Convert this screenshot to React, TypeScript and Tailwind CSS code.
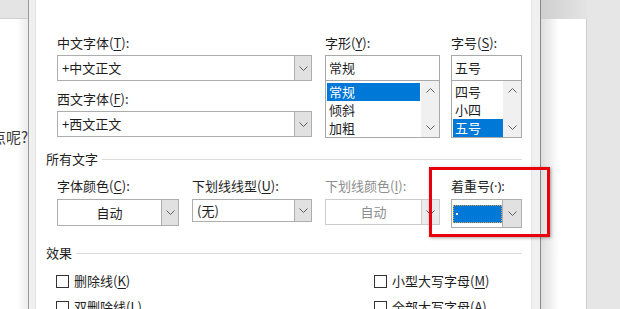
import type { ReactNode } from "react";

const FONT = { fontFamily: '"Noto Sans CJK SC", "Noto Sans", sans-serif' };

function Chevron({ up = false }: { up?: boolean }) {
  return (
    <svg width="9" height="5" viewBox="0 0 9 5" fill="none" stroke="#5f5f5f" strokeWidth="1">
      <path d={up ? "M0.5 4.5 L4.5 0.5 L8.5 4.5" : "M0.5 0.5 L4.5 4.5 L8.5 0.5"} />
    </svg>
  );
}

function Label({ text, hot, rest, disabled }: { text: string; hot: string; rest: string; disabled?: boolean }) {
  return (
    <div className={`h-4 whitespace-nowrap text-[13px] leading-4 ${disabled ? "text-[#8d8d8d]" : "text-[#1e1e1e]"}`}>
      {text}(<span className="underline underline-offset-2">{hot}</span>){rest}
    </div>
  );
}

function DropButton({ w = "w-[17px]" }: { w?: string }) {
  return (
    <div className={`flex ${w} shrink-0 items-center justify-center border-l border-[#adadad] bg-[#e1e1e1]`}>
      <Chevron />
    </div>
  );
}

function Combo({ value, h = "h-[26px]" }: { value: string; h?: string }) {
  return (
    <div className={`flex ${h} border border-[#adadad] bg-white`}>
      <div className="flex flex-1 items-center pl-[4px] text-[13px] text-[#1e1e1e]">{value}</div>
      <DropButton />
    </div>
  );
}

function ListBox({ items, selected, itemW }: { items: string[]; selected: number; itemW: string }) {
  return (
    <div className="flex h-[57px] border border-t-0 border-[#a9a9a9] bg-white">
      <div className="flex flex-1 flex-col pl-[1px] pt-[2px]">
        {items.map((it, i) => (
          <div
            key={it}
            className={`flex h-[18px] ${itemW} items-center pl-[2px] text-[13px] ${
              i === selected ? "bg-[#0078d7] text-white" : "text-[#1e1e1e]"
            }`}
          >
            {it}
          </div>
        ))}
      </div>
      <div className="flex w-[18px] flex-col items-center justify-between bg-[#f0f0f0] py-[7px]">
        <Chevron up />
        <Chevron />
      </div>
    </div>
  );
}

function Section({ title }: { title: string }) {
  return (
    <div className="flex h-4 items-center pl-[10px] pr-[9px]">
      <span className="text-[13px] leading-4 text-[#1e1e1e]">{title}</span>
      <div className="ml-[4px] h-px flex-1 bg-[#dcdcdc]" />
    </div>
  );
}

function Check({ children }: { children: ReactNode }) {
  return (
    <div className="flex h-[26px] items-center">
      <div className="h-[13px] w-[13px] border border-[#333] bg-white" />
      <span className="ml-[5px] whitespace-nowrap text-[13px] text-[#1e1e1e]">{children}</span>
    </div>
  );
}

export default function App() {
  return (
    <div className="relative flex h-[309px] w-[620px] overflow-hidden bg-[#e6e6e6]" style={FONT}>
      {/* document behind, left */}
      <div className="flex w-[28px] shrink-0 flex-col">
        <div className="h-[19px] border-b border-[#d0d0d0] bg-[#e4e4e4]" />
        <div className="flex flex-1 justify-end overflow-hidden bg-gradient-to-r from-white from-60% to-[#ececec] pt-[108px]">
          <span className="whitespace-nowrap text-[15px] leading-5 text-[#3a3a3a]">点呢?</span>
        </div>
      </div>
      <div className="w-px shrink-0 bg-[#9a9a9a]" />
      <div className="w-[7px] shrink-0 border-r border-[#e2e2e2] bg-[#f0f0f0]" />

      {/* dialog */}
      <div className="flex w-[495px] shrink-0 flex-col bg-white pt-[35px]">
        <div className="flex pl-[21px]">
          <div className="flex w-[255px] flex-col">
            <Label text="中文字体" hot="T" rest=":" />
            <div className="mt-[4px]">
              <Combo value="+中文正文" />
            </div>
            <div className="mt-[10px]">
              <Label text="西文字体" hot="F" rest=":" />
            </div>
            <div className="mt-[4px]">
              <Combo value="+西文正文" />
            </div>
          </div>
          <div className="ml-[13px] flex w-[115px] flex-col">
            <Label text="字形" hot="Y" rest=":" />
            <div className="mt-[4px] flex h-[26px] items-center border border-[#a9a9a9] pl-[3px] text-[13px] text-[#1e1e1e]">
              常规
            </div>
            <ListBox items={["常规", "倾斜", "加粗"]} selected={0} itemW="w-[93px]" />
          </div>
          <div className="ml-[11px] flex w-[71px] flex-col">
            <Label text="字号" hot="S" rest=":" />
            <div className="mt-[4px] flex h-[26px] items-center border border-[#a9a9a9] pl-[3px] text-[13px] text-[#1e1e1e]">
              五号
            </div>
            <ListBox items={["四号", "小四", "五号"]} selected={2} itemW="w-[50px]" />
          </div>
        </div>

        <div className="mt-[13px]">
          <Section title="所有文字" />
        </div>

        <div className="mt-[11px] flex items-start pl-[21px]">
          <div className="flex w-[122px] flex-col">
            <Label text="字体颜色" hot="C" rest=":" />
            <div className="mt-[5px] flex h-[27px] border border-[#adadad] bg-white">
              <div className="flex flex-1 items-center justify-center text-[13px] text-[#1e1e1e]">自动</div>
              <DropButton />
            </div>
          </div>
          <div className="ml-[13px] flex w-[120px] flex-col">
            <Label text="下划线线型" hot="U" rest=":" />
            <div className="mt-[5px]">
              <Combo value="(无)" h="h-[23px]" />
            </div>
          </div>
          <div className="ml-[13px] flex w-[115px] flex-col">
            <Label text="下划线颜色" hot="I" rest=":" disabled />
            <div className="mt-[5px] flex h-[26px] border border-[#cccccc] bg-white">
              <div className="flex flex-1 items-center justify-center text-[13px] text-[#8d8d8d]">自动</div>
              <div className="flex w-[18px] items-center justify-center border-l border-[#cccccc] bg-[#ececec]">
                <Chevron />
              </div>
            </div>
          </div>
          <div className="ml-[11px] flex w-[71px] flex-col">
            <div className="h-4 whitespace-nowrap text-[13px] leading-4 text-[#1e1e1e]">
              着重号<span className="font-['Noto_Sans',sans-serif]">(·):</span>
            </div>
            <div className="mt-[5px] flex h-[29px] border border-[#adadad] bg-white">
              <div className="flex flex-1 items-center pl-px">
                <div className="flex h-[18px] w-[49px] items-center border border-dotted border-[#d8a050] bg-[#0078d7] pl-[2px]">
                  <div className="h-[2px] w-[2px] bg-white" />
                </div>
              </div>
              <DropButton w="w-[19px]" />
            </div>
          </div>
        </div>

        <div className="mt-[17px]">
          <Section title="效果" />
        </div>

        <div className="mt-[7px] flex pl-[20px]">
          <div className="flex w-[318px] flex-col">
            <Check>
              删除线(<span className="underline underline-offset-2">K</span>)
            </Check>
            <Check>
              双删除线(<span className="underline underline-offset-2">L</span>)
            </Check>
          </div>
          <div className="flex flex-col">
            <Check>
              小型大写字母(<span className="underline underline-offset-2">M</span>)
            </Check>
            <Check>
              全部大写字母(<span className="underline underline-offset-2">A</span>)
            </Check>
          </div>
        </div>
      </div>

      <div className="w-[9px] shrink-0 border-l border-[#e4e4e4] bg-[#f0f0f0]" />
      <div className="w-px shrink-0 bg-[#8a8a8a]" />

      {/* document behind, right */}
      <div className="flex w-[46px] shrink-0 flex-col">
        <div className="h-[19px] bg-gradient-to-r from-[#cfcfcf] to-[#e4e4e4]" />
        <div className="flex-1 border-r border-[#cfcfcf] bg-gradient-to-r from-[#dedede] via-white via-40% to-white" />
      </div>
      <div className="flex-1 bg-[#e6e6e6]" />

      {/* annotation */}
      <div className="absolute left-[429px] top-[167px] h-[70px] w-[121px] border-[3px] border-[#e8000b] shadow-[1px_1px_3px_rgba(0,0,0,0.35)]" />
    </div>
  );
}
